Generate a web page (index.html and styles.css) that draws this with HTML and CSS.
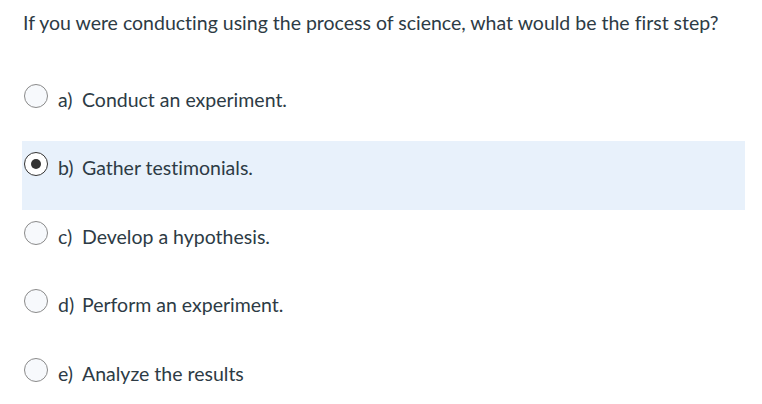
FILE: index.html
```html
<!DOCTYPE html>
<html>
<head>
    <meta charset="utf-8">
    <link rel="stylesheet" href="styles.css">
</head>
<body>
    <div class="question">
        If you were conducting using the process of science, what would be the first step?
    </div>

    <div class="answers">
        <div class="answer">
            <span class="radio"></span>
            <span class="answer-text"><span class="letter">a)</span>Conduct an experiment.</span>
        </div>
        <div class="answer selected">
            <span class="radio"></span>
            <span class="answer-text"><span class="letter">b)</span>Gather testimonials.</span>
        </div>
        <div class="answer">
            <span class="radio"></span>
            <span class="answer-text"><span class="letter">c)</span>Develop a hypothesis.</span>
        </div>
        <div class="answer">
            <span class="radio"></span>
            <span class="answer-text"><span class="letter">d)</span>Perform an experiment.</span>
        </div>
        <div class="answer">
            <span class="radio"></span>
            <span class="answer-text"><span class="letter">e)</span>Analyze the results</span>
        </div>
    </div>
</body>
</html>
```

FILE: styles.css
```css
body {
    margin: 0;
    padding: 0;
    font-family: Lato, "Open Sans", sans-serif;
    font-size: 19.5px;
    font-variant-ligatures: none;
    color: #2d3b45;
    background: #fff;
}

.question {
    padding: 10px 0 0 23px;
    line-height: 26px;
    height: 72.5px;
    box-sizing: border-box;
}

.answers {
    margin-left: 22px;
    width: 723px;
}

.answer {
    display: flex;
    align-items: flex-start;
    height: 68.6px;
    box-sizing: border-box;
    padding: 11px 0 0 2px;
}

.answer.selected {
    background: #e8f1fb;
}

.radio {
    position: relative;
    width: 24px;
    height: 24px;
    box-sizing: border-box;
    border: 1px solid #8a8a8a;
    border-radius: 50%;
    background: #f7f9fc;
    flex-shrink: 0;
}

.selected .radio {
    border: 1.5px solid #333;
    background: #fff;
}

.selected .radio::after {
    content: '';
    position: absolute;
    top: 50%;
    left: 50%;
    width: 10px;
    height: 10px;
    margin: -5px 0 0 -5px;
    border-radius: 50%;
    background: #333;
}

.answer-text {
    margin: 3px 0 0 10px;
    line-height: 26px;
}

.letter {
    display: inline-block;
    width: 24px;
}
```
